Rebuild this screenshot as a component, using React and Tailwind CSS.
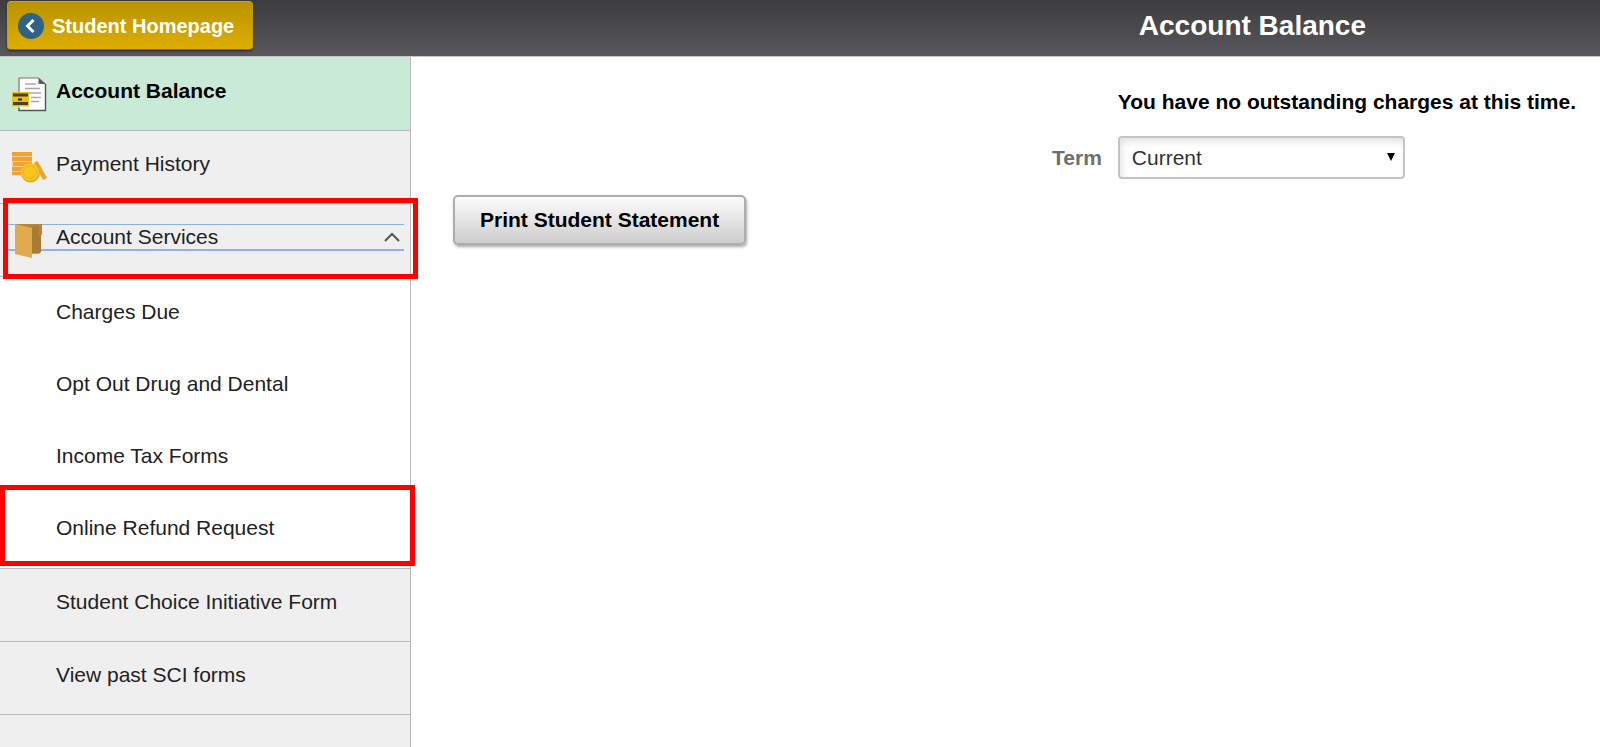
function StatementIcon() {
  return (
    <svg viewBox="0 0 36 36" className="h-9 w-9" aria-hidden="true">
      <path d="M8 2h20l6 7v25H8z" fill="#fdfdfd" />
      <path d="M8 16V2h20" fill="none" stroke="#777" strokeWidth="1.2" />
      <path d="M34.5 8v26.5H8v-3" fill="none" stroke="#555" strokeWidth="1.4" />
      <path d="M27.500 1.500V8H35z" fill="#5a5a5a" />
      <path d="M14 8h11M14 12.500h15M18 17h12M20 21.500h10M20 25.500h8" stroke="#a9a9a9" strokeWidth="1.500" />
      <path d="M1 16h17v14.500H1z" fill="#e9be1e" />
      <path d="M2 17.500h15v3H2zM2 26h15v3H2z" fill="#4a4218" />
      <path d="M7 22.500h4v2H7z" fill="#222" />
    </svg>
  )
}

function CoinsIcon() {
  return (
    <svg viewBox="0 0 36 36" className="h-9 w-9" aria-hidden="true">
      <path d="M1 2h20v23H1z" fill="#f8cf94" />
      <path d="M1 2h20v4H1zM1 7h20v4H1zM2 12h19v4H2zM1 17h18v4H1zM1 22h13v3H1z" fill="#f2a132" />
      <path d="M23 12.500l3.500-1.500L36 28l-4 2z" fill="#eda033" />
      <circle cx="19.500" cy="23" r="9.500" fill="#e9a81c" />
      <circle cx="19" cy="22" r="9" fill="#f7c51e" />
      <circle cx="19" cy="22" r="6.500" fill="none" stroke="#efb41b" strokeWidth="1" />
    </svg>
  )
}

function FolderIcon() {
  return (
    <svg viewBox="0 0 36 36" className="h-9 w-9" aria-hidden="true">
      <path d="M4 1h27v10l-1 2v16l-2 1.500H20z" fill="#b4863c" />
      <path d="M21 4l7-2v10l2 1v16l-2 1.500h-7z" fill="#a97b33" />
      <path d="M4 1l17 4v30L4 31z" fill="#dfab4c" />
    </svg>
  )
}

const subItems = [
  { label: 'Charges Due' },
  { label: 'Opt Out Drug and Dental' },
  { label: 'Income Tax Forms' },
  { label: 'Online Refund Request', highlighted: true },
]

const formItems = ['Student Choice Initiative Form', 'View past SCI forms']

const row = 'flex w-full items-center'

function Header() {
  return (
    <header className="flex h-14 items-start bg-gradient-to-b from-[#3d3d3f] to-[#58575b] text-white">
      <button
        type="button"
        className="mt-px ml-[7px] flex h-[49px] items-center gap-2 rounded-[4px] border border-t-[#a9a878] border-r-[#c49c10] border-b-[#8a6c00] border-l-[#c49c10] bg-gradient-to-b from-[#b99300] to-[#deae00] pr-[18px] pl-[10px] text-xl font-bold shadow-[0_1px_2px_#222]"
      >
        <svg viewBox="0 0 26 26" className="h-[26px] w-[26px]" aria-hidden="true">
          <circle cx="13" cy="13" r="13" fill="#2f6288" />
          <path d="M15.500 7L9.500 13l6 6" fill="none" stroke="#fff" strokeWidth="3" />
        </svg>
        Student Homepage
      </button>
      <h1 className="mt-[10px] mr-[234px] ml-auto text-[28px] leading-8 font-bold">Account Balance</h1>
    </header>
  )
}

function Sidebar() {
  return (
    <nav className="w-[411px] shrink-0 border-r border-[#b9b9b9] bg-[#efefef] text-[21px] leading-6 text-[#222]">
      <ul>
        <li className="border-b border-[#b9b9b9] bg-[#c8ead6] text-black">
          <a href="#balance" aria-current="page" className={`${row} h-[73px] gap-[9px] pb-[6px] pl-[11px] font-bold`}>
            <span className="mt-[6px]"><StatementIcon /></span>
            Account Balance
          </a>
        </li>
        <li className="border-b border-[#b9b9b9]">
          <a href="#history" className={`${row} h-[72px] gap-[9px] pb-[6px] pl-[11px]`}>
            <span className="mt-2"><CoinsIcon /></span>
            Payment History
          </a>
        </li>
        <li className="relative border-b border-[#b9b9b9]">
          <button type="button" aria-expanded="true" className={`${row} h-[72px] pr-[6px] pb-[6px] pl-2 text-left`}>
            {/* focus ring only shows above and below the label */}
            <span className="flex h-[27px] w-full items-center gap-[9px] border-t border-b-2 border-t-[#8fb0dd] border-b-[#93b1e6] pr-1 pl-[3px]">
              <span className="mt-2"><FolderIcon /></span>
              <span className="flex-1">Account Services</span>
              <svg viewBox="0 0 16 10" className="h-[10px] w-4" aria-hidden="true">
                <path d="M1 9l7-7 7 7" fill="none" stroke="#555" strokeWidth="2" />
              </svg>
            </span>
          </button>
          <span className="pointer-events-none absolute -top-[6px] -right-2 -bottom-[3px] left-[3px] z-10 border-5 border-[#ff0000]" />
        </li>
        <li className="border-b border-[#b9b9b9] bg-white pb-[3px]">
          <ul>
            {subItems.map((item) => (
              <li key={item.label} className="relative">
                <a href="#services" className={`${row} h-[72px] pb-[2px] pl-14`}>{item.label}</a>
                {item.highlighted && (
                  <span className="pointer-events-none absolute -top-2 -right-[5px] -bottom-px left-0 z-10 border-5 border-[#ff0000]" />
                )}
              </li>
            ))}
          </ul>
        </li>
        {formItems.map((label) => (
          <li key={label} className="border-b border-[#b9b9b9]">
            <a href="#forms" className={`${row} h-[72px] pb-[6px] pl-14`}>{label}</a>
          </li>
        ))}
      </ul>
    </nav>
  )
}

function Balance() {
  return (
    <main className="flex-1 pt-[33px] pr-6 pl-[42px] text-[21px] leading-6">
      <div className="flex justify-end">
        <div className="grid grid-cols-[auto_auto] items-center gap-x-4 gap-y-[22px]">
          <p className="col-start-2 font-bold text-black">You have no outstanding charges at this time.</p>
          <label htmlFor="term" className="font-bold text-[#6e6e6e]">Term</label>
          <div className="relative w-[287px]">
            <select
              id="term"
              defaultValue="Current"
              className="h-[43px] w-full appearance-none rounded-[4px] border-2 border-[#c4c4c4] bg-white px-3 text-[#333] shadow-[inset_2px_4px_6px_#e4e4e4]"
            >
              <option>Current</option>
            </select>
            <svg viewBox="0 0 8 8" className="pointer-events-none absolute top-[17px] right-[10px] h-2 w-2" aria-hidden="true">
              <path d="M0 0h8L4 8z" fill="#000" />
            </svg>
          </div>
        </div>
      </div>
      <button
        type="button"
        className="mt-4 h-[50px] rounded-[5px] border-2 border-[#adadad] bg-gradient-to-b from-[#fdfdfd] to-[#cdcdcd] px-[25px] font-bold text-black shadow-[1px_2px_3px_#aaa]"
      >
        Print Student Statement
      </button>
    </main>
  )
}

export default function App() {
  return (
    <div className="flex min-h-screen flex-col bg-white font-['Liberation_Sans',Arial,sans-serif]">
      <Header />
      <div className="flex flex-1 border-t border-[#c8c8c8]">
        <Sidebar />
        <Balance />
      </div>
    </div>
  )
}
